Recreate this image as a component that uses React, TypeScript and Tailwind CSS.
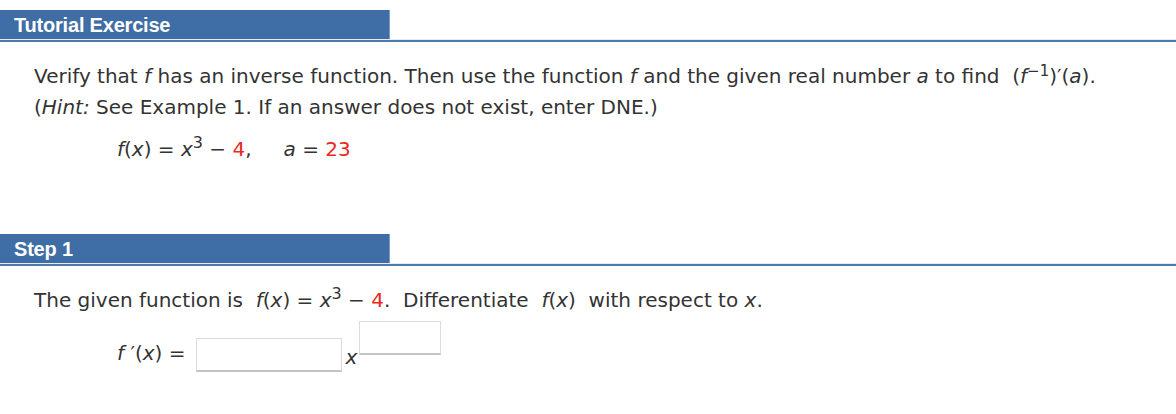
import React from 'react';

const SectionBar = ({ title }: { title: string }) => (
    <div>
        <div className="w-[390px] h-[29px] bg-[#3f6da5] border-r border-[#7b9cc6] flex items-center pl-[14px]">
            <span className="text-white font-bold text-[20px] tracking-[-0.2px] [font-family:'Liberation_Sans',Arial,sans-serif]">
                {title}
            </span>
        </div>
        <div className="h-[1px] bg-[#e3ebf4]" />
        <div className="h-[2px] bg-[#4f78ad]" />
    </div>
);

const Red = ({ children }: { children: React.ReactNode }) => (
    <span className="text-[#e8291c]">{children}</span>
);

const Box = ({ className }: { className: string }) => (
    <div className={`border border-[#dcdcdc] border-b-2 border-b-[#c4c4c4] bg-white ${className}`} />
);

export default function App() {
    return (
        <div className="w-[1176px] h-[414px] bg-white pt-[10px] text-[#333333] [font-family:'DejaVu_Sans',Verdana,sans-serif] text-[20px]">
            <SectionBar title="Tutorial Exercise" />

            <div className="pl-[34px] pt-[19px]">
                <p className="leading-[31px]">
                    Verify that <i>f</i> has an inverse function. Then use the function <i>f</i> and the given real number <i>a</i> to find&nbsp; (<i>f</i>
                    <sup className="text-[15px]">−1</sup>)′(<i>a</i>).
                </p>
                <p className="leading-[31px]">
                    (<i>Hint:</i> See Example 1. If an answer does not exist, enter DNE.)
                </p>
                <div className="pl-[83px] pt-[11px] leading-[30px]">
                    <i>f</i>(<i>x</i>) = <i>x</i><sup className="text-[16px]">3</sup> − <Red>4</Red>,
                    <span className="inline-block w-[32px]" />
                    <i>a</i> = <Red>23</Red>
                </div>
            </div>

            <div className="pt-[70px]">
                <SectionBar title="Step 1" />
            </div>

            <div className="pl-[34px] pt-[19px]">
                <p className="leading-[30px]">
                    The given function is&nbsp; <i>f</i>(<i>x</i>) = <i>x</i><sup className="text-[16px]">3</sup> − <Red>4</Red>.&nbsp; Differentiate&nbsp; <i>f</i>(<i>x</i>)&nbsp; with respect to <i>x</i>.
                </p>
                <div className="flex items-end pl-[83px] pt-[6px]">
                    <span className="mb-[4px]"><i>f</i> ′(<i>x</i>) =</span>
                    <Box className="ml-[10px] w-[146px] h-[34px]" />
                    <span className="ml-[4px] mb-[0px]"><i>x</i></span>
                    <Box className="ml-[2px] mb-[17px] w-[82px] h-[34px]" />
                </div>
            </div>
        </div>
    );
}
